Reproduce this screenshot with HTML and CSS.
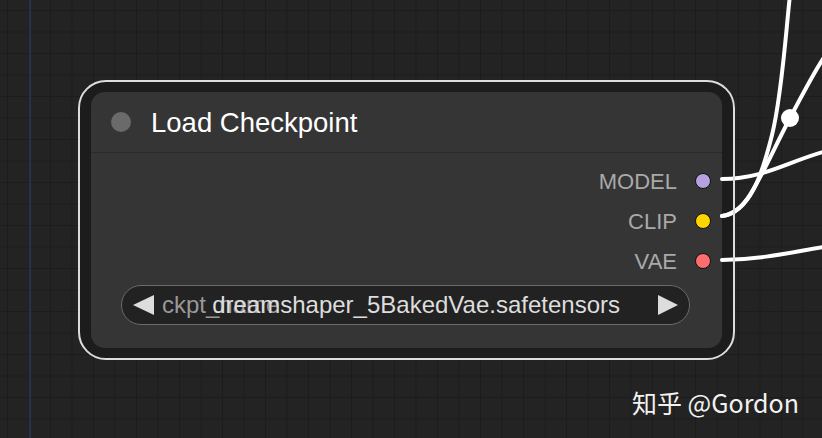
FILE: index.html
```html
<!DOCTYPE html>
<html>
<head>
<meta charset="utf-8">
<link rel="stylesheet" href="styles.css">
</head>
<body>
<div class="canvas">
  <div class="node">
    <div class="title">
      <span class="title-dot"></span>
      <span class="title-text">Load Checkpoint</span>
    </div>
    <div class="outputs">
      <div class="slot"><span class="slot-name">MODEL</span><span class="dot dot-model"></span></div>
      <div class="slot"><span class="slot-name">CLIP</span><span class="dot dot-clip"></span></div>
      <div class="slot"><span class="slot-name">VAE</span><span class="dot dot-vae"></span></div>
    </div>
    <div class="widget">
      <svg class="arrow" width="21" height="20" viewBox="0 0 21 20"><polygon points="0,10 21,0 21,20" fill="#dddddd"/></svg>
      <div class="combo">
        <span class="combo-label">ckpt_name</span>
        <span class="combo-value">dreamshaper_5BakedVae.safetensors</span>
      </div>
      <svg class="arrow" width="20" height="20" viewBox="0 0 20 20"><polygon points="0,0 20,10 0,20" fill="#dddddd"/></svg>
    </div>
  </div>
  <svg class="wires" width="822" height="438" viewBox="0 0 822 438">
    <g fill="none" stroke="#ffffff" stroke-width="4" stroke-linecap="round">
      <path d="M722,179 C765,179 790,160 830,150"/>
      <path d="M722,216 C750,212 762,175 772,135 S786,30 790,-5"/>
      <path d="M722,216 C748,214 760,175 790,118 S815,72 830,48"/>
      <path d="M722,260 C770,259 800,250 830,246"/>
    </g>
    <circle cx="790" cy="118" r="9" fill="#ffffff"/>
  </svg>
  <div class="watermark">知乎 @Gordon</div>
</div>
</body>
</html>
```
FILE: styles.css
```css
html, body {
  margin: 0;
  padding: 0;
}
body {
  background: #222222;
  font-family: "Liberation Sans", Arial, sans-serif;
}
.canvas {
  position: relative;
  width: 822px;
  height: 438px;
  overflow: hidden;
  background-color: #232323;
  background-image:
    linear-gradient(to right, transparent 29px, #283150 29px, #283150 31px, transparent 31px),
    linear-gradient(to right, #1c1c1c 1px, transparent 1px),
    linear-gradient(to bottom, #1c1c1c 1px, transparent 1px);
  background-size: 822px 438px, 21.5px 21.5px, 21.5px 21.5px;
  background-position: 0 0, 7px 0, 0 10px;
  background-repeat: no-repeat, repeat, repeat;
}
.node {
  position: absolute;
  left: 91px;
  top: 92px;
  width: 631px;
  height: 256px;
  box-sizing: border-box;
  background: #353535;
  border-radius: 14px;
  box-shadow: 0 0 0 12px #1c1c1c;
  display: flex;
  flex-direction: column;
}
.node::after {
  content: "";
  position: absolute;
  top: -12px;
  bottom: -12px;
  left: -13px;
  right: -13px;
  border: 2px solid #dcdcdc;
  border-radius: 28px;
  z-index: 3;
  pointer-events: none;
}
.title {
  height: 61px;
  box-sizing: border-box;
  border-bottom: 1px solid #2a2a2a;
  display: flex;
  align-items: center;
  padding-left: 20px;
  gap: 20px;
}
.title-dot {
  width: 20px;
  height: 20px;
  border-radius: 50%;
  background: #6a6a6a;
}
.title-text {
  color: #ffffff;
  font-size: 27.5px;
  line-height: 1;
  position: relative;
  top: 1px;
}
.outputs {
  padding-top: 8px;
  display: flex;
  flex-direction: column;
}
.slot {
  height: 40px;
  display: flex;
  justify-content: flex-end;
  align-items: center;
  padding-right: 11px;
  gap: 18px;
}
.slot-name {
  color: #a9a9a9;
  font-size: 22px;
  line-height: 1;
  position: relative;
  top: 1px;
}
.dot {
  width: 14px;
  height: 14px;
  border-radius: 50%;
  border: 1.5px solid #111111;
}
.dot-model { background: #b6a1e0; }
.dot-clip { background: #ffd500; }
.dot-vae { background: #ff6e6e; }
.widget {
  margin: 4px 32px 0 30px;
  height: 40px;
  box-sizing: border-box;
  border: 1.5px solid #6a6a6a;
  border-radius: 20px;
  background: #222222;
  display: flex;
  align-items: center;
  padding: 0 11px;
}
.arrow {
  flex: none;
  display: block;
}
.combo {
  flex: 1;
  display: grid;
  margin: 0 38px 0 8px;
  font-size: 24px;
  line-height: 1;
}
.combo-label,
.combo-value {
  grid-area: 1 / 1;
  white-space: nowrap;
}
.combo-label {
  color: #999999;
  justify-self: start;
}
.combo-value {
  color: #dddddd;
  justify-self: end;
}
.wires {
  position: absolute;
  left: 0;
  top: 0;
  z-index: 2;
}
.watermark {
  position: absolute;
  left: 632px;
  top: 388px;
  font-family: "Noto Sans CJK SC", "Noto Sans", sans-serif;
  font-size: 25px;
  line-height: 28px;
  color: #f2f2f2;
  z-index: 4;
  white-space: nowrap;
}
```
